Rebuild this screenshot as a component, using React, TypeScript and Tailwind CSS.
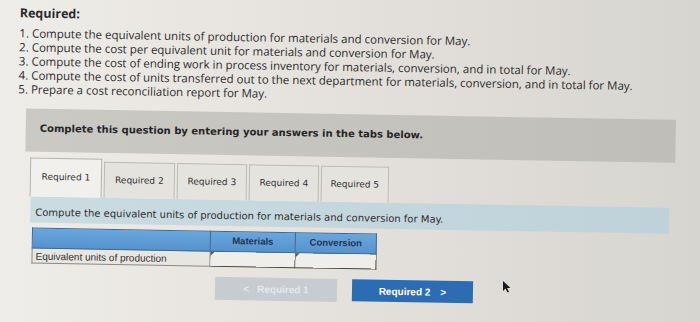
import React from "react";

const steps = [
  "1. Compute the equivalent units of production for materials and conversion for May.",
  "2. Compute the cost per equivalent unit for materials and conversion for May.",
  "3. Compute the cost of ending work in process inventory for materials, conversion, and in total for May.",
  "4. Compute the cost of units transferred out to the next department for materials, conversion, and in total for May.",
  "5. Prepare a cost reconciliation report for May.",
];

const tabs = [
  { label: "Required 1", w: "w-[72px]" },
  { label: "Required 2", w: "w-[71px]" },
  { label: "Required 3", w: "w-[70px]" },
  { label: "Required 4", w: "w-[70px]" },
  { label: "Required 5", w: "w-[68px]" },
];

function InputCell({ width }: { width: string }) {
  return (
    <td className={`relative ${width} h-[15px] border border-[#4a4a4a] bg-[#efeeea]`}>
      <span className="absolute left-0 top-0 w-0 h-0 border-t-[4px] border-t-[#555] border-r-[4px] border-r-transparent" />
    </td>
  );
}

export default function App() {
  return (
    <div className="relative w-[700px] h-[322px] overflow-hidden bg-gradient-to-r from-[#efede9] via-[#e4e1dc] to-[#d7d5d0]">
      <div className="origin-top-left rotate-[1deg] w-[700px]">
        <div className="pl-[20px] pt-[5px] text-[#2b2b2b] font-['Open_Sans',sans-serif]">
          <p className="font-bold text-[12.5px] leading-[15px]">Required:</p>
          <ol className="mt-[6px] text-[11.5px] leading-[14px]">
            {steps.map((s) => (
              <li key={s} className="whitespace-nowrap">
                {s}
              </li>
            ))}
          </ol>
        </div>

        <div className="ml-[28px] mt-[12px] w-[650px] h-[43px] flex items-center pl-[14px] pb-[4px] bg-gradient-to-r from-[#cbc9c4] to-[#c0beb9]">
          <span className="font-['DejaVu_Sans',sans-serif] font-bold text-[10px] text-[#262626]">
            Complete this question by entering your answers in the tabs below.
          </span>
        </div>

        <div className="ml-[33px] mt-[6px] h-[39px] flex items-end gap-[2px] font-['DejaVu_Sans',sans-serif] text-[9px] text-[#333]">
          {tabs.map((t, i) => (
            <div
              key={t.label}
              className={`${t.w} flex items-center justify-center border border-b-0 ${
                i === 0
                  ? "h-[39px] bg-[#f1f0ec] border-[#b5b3ae]"
                  : "h-[36px] bg-[#e5e3de] border-[#bdbbb6]"
              }`}
            >
              {t.label}
            </div>
          ))}
        </div>

        <div className="ml-[34px] w-[639px] h-[26px] flex items-center pl-[5px] pt-[4px] bg-gradient-to-r from-[#cadce2] to-[#bfd2d9] font-['DejaVu_Sans',sans-serif] text-[10px] text-[#2e2e2e]">
          Compute the equivalent units of production for materials and conversion for May.
        </div>

        <table className="ml-[36px] mt-[5px] border-collapse font-['Liberation_Sans',sans-serif] text-[9.5px]">
          <tbody>
            <tr className="h-[20px] bg-gradient-to-b from-[#6aa6dd] to-[#5592cc] text-[#1f3550] font-bold">
              <td className="w-[178px] border border-[#3d6a96]" />
              <td className="w-[85px] border border-[#3d6a96] text-center">Materials</td>
              <td className="w-[81px] border border-[#3d6a96] text-center">Conversion</td>
            </tr>
            <tr>
              <td className="h-[15px] border border-[#8a8a8a] bg-[#e8e6e1] pl-[3px] text-[#333] text-[10px] leading-[13px]">
                Equivalent units of production
              </td>
              <InputCell width="w-[85px]" />
              <InputCell width="w-[81px]" />
            </tr>
          </tbody>
        </table>

        <div className="mt-[10px] flex font-['Liberation_Sans',sans-serif] font-bold text-[10px]">
          <div className="ml-[220px] w-[122px] h-[23px] flex items-center justify-center gap-[8px] bg-[#c6ccd0] text-[#e5e8ea]">
            <span>&lt;</span>
            <span>Required 1</span>
          </div>
          <div className="ml-[15px] w-[121px] h-[22px] flex items-center justify-center gap-[10px] bg-[#2b6cb3] text-white">
            <span>Required 2</span>
            <span>&gt;</span>
          </div>
        </div>
      </div>

      <svg className="absolute left-[503px] top-[281px]" width="8" height="12" viewBox="0 0 8 12">
        <path d="M0 0 L0 10 L2.5 7.5 L4.5 11.5 L6 10.8 L4 7 L7.5 7 Z" fill="#1a1a1a" />
      </svg>
    </div>
  );
}
